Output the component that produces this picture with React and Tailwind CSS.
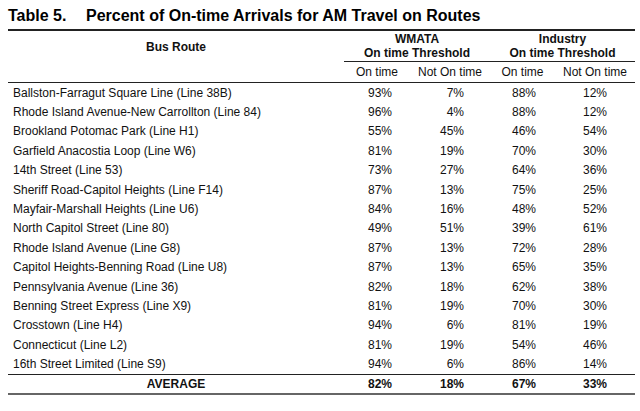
const rows = [
  ["Ballston-Farragut Square Line (Line 38B)", "93%", "7%", "88%", "12%"],
  ["Rhode Island Avenue-New Carrollton (Line 84)", "96%", "4%", "88%", "12%"],
  ["Brookland Potomac Park (Line H1)", "55%", "45%", "46%", "54%"],
  ["Garfield Anacostia Loop (Line W6)", "81%", "19%", "70%", "30%"],
  ["14th Street (Line 53)", "73%", "27%", "64%", "36%"],
  ["Sheriff Road-Capitol Heights (Line F14)", "87%", "13%", "75%", "25%"],
  ["Mayfair-Marshall Heights (Line U6)", "84%", "16%", "48%", "52%"],
  ["North Capitol Street (Line 80)", "49%", "51%", "39%", "61%"],
  ["Rhode Island Avenue (Line G8)", "87%", "13%", "72%", "28%"],
  ["Capitol Heights-Benning Road (Line U8)", "87%", "13%", "65%", "35%"],
  ["Pennsylvania Avenue (Line 36)", "82%", "18%", "62%", "38%"],
  ["Benning Street Express (Line X9)", "81%", "19%", "70%", "30%"],
  ["Crosstown (Line H4)", "94%", "6%", "81%", "19%"],
  ["Connecticut (Line L2)", "81%", "19%", "54%", "46%"],
  ["16th Street Limited (Line S9)", "94%", "6%", "86%", "14%"],
];

const cols = "grid grid-cols-[336px_66px_80px_65px_80px]";

function Row({ cells, bold }) {
  return (
    <div className={`${cols} h-[19.4px] items-center ${bold ? "font-bold" : ""}`}>
      {bold ? (
        <div className="text-center">{cells[0]}</div>
      ) : (
        <div className="pl-[5px] whitespace-nowrap">{cells[0]}</div>
      )}
      <div className="text-right pr-[18px]">{cells[1]}</div>
      <div className="text-right pr-[26px]">{cells[2]}</div>
      <div className="text-right pr-[19px]">{cells[3]}</div>
      <div className="text-right pr-[28px]">{cells[4]}</div>
    </div>
  );
}

export default function App() {
  return (
    <div className="w-[640px] h-[411px] bg-white text-[#111] font-['Liberation_Sans',Arial,sans-serif] text-[12px]">
      <div className="h-[29px] pt-[7px] pl-[8px] text-[16px] leading-[18px] font-bold text-black flex">
        <span className="w-[78px]">Table 5.</span>
        <span>Percent of On-time Arrivals for AM Travel on Routes</span>
      </div>
      <div className="ml-[8px] w-[627px]">
        <div className={`${cols} grid-rows-[31px_20px] border-t-2 border-b border-[#222] font-bold`}>
          <div className="flex items-center justify-center">Bus Route</div>
          <div className="col-span-2 flex flex-col items-center justify-center leading-[14.5px] border-b border-[#222]">
            <span>WMATA</span>
            <span>On time Threshold</span>
          </div>
          <div className="col-span-2 flex flex-col items-center justify-center leading-[14.5px] border-b border-[#222]">
            <span>Industry</span>
            <span>On time Threshold</span>
          </div>
          <div></div>
          <div className="flex items-center justify-center font-normal">On time</div>
          <div className="flex items-center justify-center font-normal">Not On time</div>
          <div className="flex items-center justify-center font-normal">On time</div>
          <div className="flex items-center justify-center font-normal">Not On time</div>
        </div>
        <div>
          {rows.map((r) => (
            <Row key={r[0]} cells={r} />
          ))}
        </div>
        <div className="border-t border-b-2 border-t-[#222] border-b-[#666] h-[21px] flex flex-col justify-center">
          <Row cells={["AVERAGE", "82%", "18%", "67%", "33%"]} bold />
        </div>
      </div>
    </div>
  );
}
